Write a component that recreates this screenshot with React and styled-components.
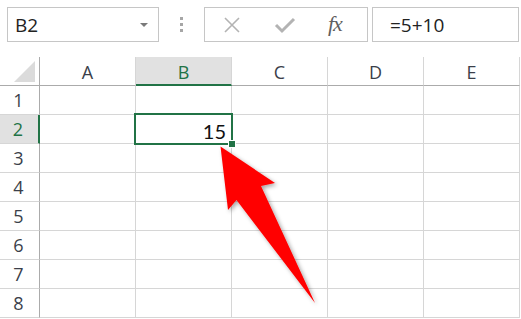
import React from 'react';
import styled, { createGlobalStyle } from 'styled-components';

const GlobalStyle = createGlobalStyle`
  html, body {
    margin: 0;
    padding: 0;
    background: #ffffff;
  }
  body {
    font-family: "Open Sans", "Noto Sans", sans-serif;
  }
`;

const Page = styled.div`
  position: relative;
  width: 521px;
  height: 319px;
  overflow: hidden;
`;

const Toolbar = styled.div`
  display: flex;
  align-items: stretch;
  height: 35px;
  padding: 7px 2px 0 7px;
`;

const NameBox = styled.div`
  box-sizing: border-box;
  width: 152px;
  display: flex;
  align-items: center;
  justify-content: space-between;
  padding: 0 10px 0 7px;
  border: 1px solid #c6c6c6;
  font-size: 19px;
  color: #222;
`;

const Caret = styled.span`
  width: 0;
  height: 0;
  border-left: 4px solid transparent;
  border-right: 4px solid transparent;
  border-top: 4px solid #7a7a7a;
`;

const Grip = styled.div`
  width: 45px;
  display: flex;
  flex-direction: column;
  align-items: center;
  justify-content: center;
  gap: 3px;

  & span {
    width: 3px;
    height: 3px;
    background: #a6a6a6;
  }
`;

const Buttons = styled.div`
  box-sizing: border-box;
  width: 164px;
  display: flex;
  align-items: center;
  gap: 32px;
  padding-left: 17px;
  border: 1px solid #c6c6c6;
`;

const Fx = styled.span`
  font-family: "Liberation Serif", "DejaVu Serif", serif;
  font-style: italic;
  font-size: 22px;
  color: #5f5f5f;
  letter-spacing: -1px;
  margin-top: -2px;
`;

const Formula = styled.div`
  box-sizing: border-box;
  flex: 1;
  margin-left: 4px;
  display: flex;
  align-items: center;
  padding-left: 17px;
  border: 1px solid #c6c6c6;
  font-size: 19px;
  color: #222;
`;

const Sheet = styled.div`
  display: grid;
  grid-template-columns: 40px repeat(5, 96px);
  grid-auto-rows: 29px;
  margin-top: 15px;
`;

const ColHead = styled.div`
  box-sizing: border-box;
  display: flex;
  align-items: center;
  justify-content: center;
  padding-top: 2px;
  font-size: 18px;
  color: ${(p) => (p.$active ? '#217346' : '#3b3f4a')};
  background: ${(p) => (p.$active ? '#e1e1e1' : '#ffffff')};
  border-right: 1px solid #d6d6d6;
  border-bottom: ${(p) => (p.$active ? '2px solid #217346' : '1px solid #ababab')};
`;

const Corner = styled.div`
  box-sizing: border-box;
  display: flex;
  align-items: flex-end;
  justify-content: flex-end;
  padding: 0 4px 3px 0;
  border-right: 1px solid #ababab;
  border-bottom: 1px solid #ababab;
`;

const RowHead = styled.div`
  box-sizing: border-box;
  display: flex;
  align-items: center;
  justify-content: center;
  padding-right: 2px;
  font-size: 18px;
  color: ${(p) => (p.$active ? '#217346' : '#3b3f4a')};
  background: ${(p) => (p.$active ? '#e1e1e1' : '#ffffff')};
  border-right: ${(p) => (p.$active ? '2px solid #217346' : '1px solid #ababab')};
  border-bottom: 1px solid #d6d6d6;
`;

const Cell = styled.div`
  position: relative;
  box-sizing: border-box;
  display: flex;
  align-items: center;
  justify-content: flex-end;
  padding: 3px 5px 0 0;
  font-family: Lato, "Open Sans", sans-serif;
  font-size: 20px;
  color: #111;
  border-right: 1px solid #d6d6d6;
  border-bottom: 1px solid #d6d6d6;
`;

const Selection = styled.div`
  position: absolute;
  z-index: 2;
  left: -2px;
  top: -2px;
  right: -2px;
  bottom: -2px;
  border: 2px solid #217346;
  pointer-events: none;
`;

const Handle = styled.div`
  position: absolute;
  right: -5px;
  bottom: -5px;
  width: 6px;
  height: 6px;
  background: #217346;
  border: 1px solid #ffffff;
`;

const ArrowLayer = styled.svg`
  position: absolute;
  z-index: 3;
  left: 0;
  top: 0;
  pointer-events: none;
`;

const columns = ['A', 'B', 'C', 'D', 'E'];
const rows = [1, 2, 3, 4, 5, 6, 7, 8];

const App = () => {
  return (
    <Page>
      <GlobalStyle />
      <Toolbar>
        <NameBox>
          B2
          <Caret />
        </NameBox>
        <Grip>
          <span />
          <span />
          <span />
        </Grip>
        <Buttons>
          <svg width="20" height="20" viewBox="0 0 20 20">
            <path d="M3 3 L17 17 M17 3 L3 17" stroke="#b3b3b3" strokeWidth="1.6" fill="none" />
          </svg>
          <svg width="22" height="20" viewBox="0 0 22 20">
            <path d="M2 10 L8 16 L20 4" stroke="#b3b3b3" strokeWidth="3" fill="none" />
          </svg>
          <Fx>fx</Fx>
        </Buttons>
        <Formula>=5+10</Formula>
      </Toolbar>
      <Sheet>
        <Corner>
          <svg width="21" height="21" viewBox="0 0 21 21">
            <polygon points="0,21 21,0 21,21" fill="#dbdbdb" />
          </svg>
        </Corner>
        {columns.map((c) => (
          <ColHead key={c} $active={c === 'B'}>
            {c}
          </ColHead>
        ))}
        {rows.map((r) => (
          <React.Fragment key={r}>
            <RowHead $active={r === 2}>{r}</RowHead>
            {columns.map((c) => {
              const selected = r === 2 && c === 'B';
              return (
                <Cell key={c}>
                  {selected && '15'}
                  {selected && (
                    <Selection>
                      <Handle />
                    </Selection>
                  )}
                </Cell>
              );
            })}
          </React.Fragment>
        ))}
      </Sheet>
      <ArrowLayer width="521" height="319" viewBox="0 0 521 319">
        <defs>
          <filter id="shadow" x="-20%" y="-20%" width="140%" height="140%">
            <feDropShadow dx="2" dy="2" stdDeviation="2" floodColor="#000" floodOpacity="0.35" />
          </filter>
        </defs>
        <polygon
          points="220.5,146.5 275,183 261,186 315,303 236.5,200 228,210"
          fill="#ff0000"
          filter="url(#shadow)"
        />
      </ArrowLayer>
    </Page>
  );
};

export default App;
